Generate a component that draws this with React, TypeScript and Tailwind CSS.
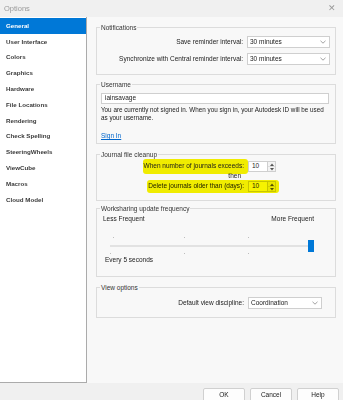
import React from "react";

const navItems = [
  "General",
  "User Interface",
  "Colors",
  "Graphics",
  "Hardware",
  "File Locations",
  "Rendering",
  "Check Spelling",
  "SteeringWheels",
  "ViewCube",
  "Macros",
  "Cloud Model",
];

const Chevron = () => (
  <svg width="6" height="4" viewBox="0 0 6 4" className="shrink-0">
    <path d="M0.5 0.8 L3 3.2 L5.5 0.8" fill="none" stroke="#7a7a7a" strokeWidth="0.7" />
  </svg>
);

const Select: React.FC<{ value: string; width: string }> = ({ value, width }) => (
  <div
    className={`${width} h-[12px] bg-white border border-[#cfcfcf] flex items-center justify-between pl-[2px] pr-[3px]`}
  >
    <span>{value}</span>
    <Chevron />
  </div>
);

const Spinner: React.FC<{ value: string }> = ({ value }) => (
  <div className="flex h-[11px]">
    <div className="w-[20px] h-full bg-white border border-[#cfcfcf] flex items-center pl-[3px]">{value}</div>
    <div className="w-[8px] h-full flex flex-col border border-l-0 border-[#cfcfcf] bg-[#f3f3f3]">
      <div className="flex-1 flex items-center justify-center border-b border-[#dcdcdc]">
        <svg width="4" height="3" viewBox="0 0 4 3">
          <path d="M0 3 L2 0.5 L4 3Z" fill="#555" />
        </svg>
      </div>
      <div className="flex-1 flex items-center justify-center">
        <svg width="4" height="3" viewBox="0 0 4 3">
          <path d="M0 0 L2 2.5 L4 0Z" fill="#555" />
        </svg>
      </div>
    </div>
  </div>
);

const Group: React.FC<{ title: string; className: string; children?: React.ReactNode }> = ({
  title,
  className,
  children,
}) => (
  <div className={`relative shrink-0 border border-[#dcdcdc] ${className}`}>
    {/* caption sits over the top border */}
    <span className="absolute left-[3px] -top-[5px] px-[1px] bg-[#f8f8f8] leading-[9px] text-[#333]">{title}</span>
    {children}
  </div>
);

export default function App() {
  return (
    <div className="w-[343px] h-[400px] overflow-hidden bg-[#f0f0f0] flex flex-col font-['Liberation_Sans',Arial,sans-serif] text-[6.5px] text-[#1a1a1a] leading-none whitespace-nowrap">
      {/* Title bar */}
      <div className="h-[17px] shrink-0 flex items-center justify-between pl-[4px] pr-[7px] text-[#9a9a9a]">
        <span className="text-[7.5px]">Options</span>
        <span className="text-[9px] font-light">✕</span>
      </div>

      <div className="h-[366px] shrink-0 flex">
        {/* Category list */}
        <div className="w-[87px] shrink-0 bg-white border-r border-b border-[#ababab] pt-[1px]">
          {navItems.map((item, i) => (
            <div
              key={item}
              className={`h-[15.8px] flex items-center pl-[6px] font-bold text-[6.2px] ${
                i === 0 ? "bg-[#0078d7] text-white" : "text-[#3a3a3a]"
              }`}
            >
              {item}
            </div>
          ))}
        </div>

        {/* Settings panel */}
        <div className="flex-1 bg-[#f8f8f8] pl-[9px] pr-[7px] pt-[10px] flex flex-col">
          <Group title="Notifications" className="h-[48px]">
            <div className="flex flex-col gap-[5px] pt-[8px] pr-[5px]">
              <div className="flex items-center justify-end gap-[4px]">
                <span>Save reminder interval:</span>
                <Select value="30 minutes" width="w-[83px]" />
              </div>
              <div className="flex items-center justify-end gap-[4px]">
                <span>Synchronize with Central reminder interval:</span>
                <Select value="30 minutes" width="w-[83px]" />
              </div>
            </div>
          </Group>

          <Group title="Username" className="h-[60px] mt-[9px]">
            <div className="pt-[8px] pl-[4px] pr-[6px]">
              <div className="h-[11px] bg-white border border-[#cfcfcf] flex items-center pl-[3px]">iainsavage</div>
              <div className="mt-[2px] leading-[8px] text-[6.3px]">
                You are currently not signed in. When you sign in, your Autodesk ID will be used
                <br />
                as your username.
              </div>
              <div className="mt-[11px] text-[#0066cc] underline">Sign In</div>
            </div>
          </Group>

          <Group title="Journal file cleanup" className="h-[47px] mt-[10px]">
            <div className="pt-[6px] flex flex-col">
              <div className="relative flex items-center">
                <span className="absolute left-[46px] -top-[2px] w-[105px] h-[15px] rounded-[3px] bg-[#f7f300] mix-blend-multiply" />
                <span className="relative w-[147px] text-right">When number of journals exceeds:</span>
                <div className="relative ml-[4px]">
                  <Spinner value="10" />
                </div>
              </div>
              <div className="w-[147px] text-right pr-[3px] h-[9px] flex items-center justify-end">then</div>
              <div className="relative flex items-center">
                <span className="relative w-[147px] text-right">Delete journals older than (days):</span>
                <div className="relative ml-[4px]">
                  <Spinner value="10" />
                </div>
                <span className="absolute left-[50px] -top-[1px] w-[132px] h-[13px] rounded-[3px] bg-[#f7f300] mix-blend-multiply" />
              </div>
            </div>
          </Group>

          <Group title="Worksharing update frequency" className="h-[69px] mt-[7px]">
            <div className="pt-[7px] pl-[6px] pr-[21px] flex justify-between">
              <span>Less Frequent</span>
              <span>More Frequent</span>
            </div>
            {/* slider */}
            <div className="relative ml-[13px] mt-[12px] w-[201px] h-[20px]">
              <span className="absolute left-[3px] top-[2px] w-[1px] h-[1px] bg-[#bdbdbd]" />
              <span className="absolute left-[74px] top-[2px] w-[1px] h-[1px] bg-[#bdbdbd]" />
              <span className="absolute left-[138px] top-[2px] w-[1px] h-[1px] bg-[#bdbdbd]" />
              <span className="absolute left-[0px] top-[18px] w-[1px] h-[1px] bg-[#bdbdbd]" />
              <span className="absolute left-[74px] top-[18px] w-[1px] h-[1px] bg-[#bdbdbd]" />
              <span className="absolute left-[138px] top-[18px] w-[1px] h-[1px] bg-[#bdbdbd]" />
              <div className="absolute left-0 right-0 top-[10px] h-[2px] bg-[#e2e2e2]" />
              <div className="absolute left-[198px] top-[5px] w-[6px] h-[12px] bg-[#0078d7]" />
            </div>
            <div className="mt-[2px] pl-[8px]">Every 5 seconds</div>
          </Group>

          <Group title="View options" className="h-[31px] mt-[10px]">
            <div className="pt-[9px] flex items-center">
              <span className="w-[147px] text-right">Default view discipline:</span>
              <div className="ml-[4px]">
                <Select value="Coordination" width="w-[74px]" />
              </div>
            </div>
          </Group>
        </div>
      </div>

      {/* Dialog buttons */}
      <div className="flex-1 flex justify-end items-start gap-[5px] pt-[5px] pr-[4px]">
        {["OK", "Cancel", "Help"].map((label) => (
          <button
            key={label}
            className="w-[42px] h-[15px] bg-[#fdfdfd] border border-[#d0d0d0] rounded-[2px] flex items-center justify-center text-[6.5px]"
          >
            {label}
          </button>
        ))}
      </div>
    </div>
  );
}
